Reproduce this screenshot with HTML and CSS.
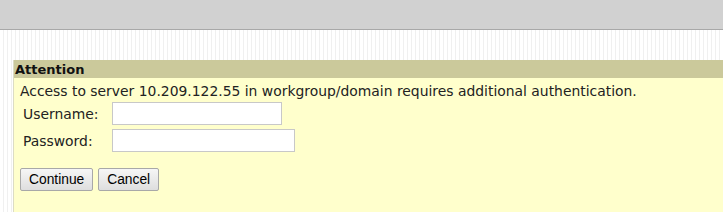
FILE: index.html
```html
<!DOCTYPE html>
<html lang="en">
<head>
    <meta charset="UTF-8">
    <title>Authentication Required</title>
    <link rel="stylesheet" href="styles.css">
</head>
<body>
    <div class="topbar"></div>
    <div class="page">
        <div class="notice">
            <div class="notice-title">Attention</div>
            <div class="notice-body">
                <p class="message">Access to server 10.209.122.55 in workgroup/domain requires additional authentication.</p>
                <form class="login">
                    <div class="field">
                        <label for="user">Username:</label>
                        <input type="text" id="user" class="user-input">
                    </div>
                    <div class="field">
                        <label for="pass">Password:</label>
                        <input type="password" id="pass" class="pass-input">
                    </div>
                    <div class="buttons">
                        <button type="button" class="btn">Continue</button>
                        <button type="button" class="btn">Cancel</button>
                    </div>
                </form>
            </div>
        </div>
    </div>
</body>
</html>
```

FILE: styles.css
```css
body {
    margin: 0;
    font-family: "DejaVu Sans", Verdana, sans-serif;
    font-size: 13.9px;
    color: #222;
    background: #fff;
}
.topbar {
    height: 29px;
    background: #d1d1d1;
    border-bottom: 1px solid #a8a8a8;
}
.page {
    padding: 30px 0 0 13px;
    background: repeating-linear-gradient(90deg, #fff 0, #fff 3px, #f0f0f0 3px, #f0f0f0 4px);
}
.notice {
    background: #ffffcc;
    border-left: 1px solid #dcdcc4;
    height: 152px;
}
.notice-title {
    background: #cbc99b;
    height: 18px;
    line-height: 19px;
    font-size: 13px;
    font-weight: bold;
    color: #111;
    padding-left: 1px;
}
.notice-body {
    padding: 5px 0 0 6px;
}
.message {
    margin: 0;
    line-height: 16px;
}
.field {
    display: flex;
    align-items: center;
    margin-top: 3px;
}
.field + .field {
    margin-top: 4px;
}
.field label {
    width: 92px;
    padding-left: 3px;
    box-sizing: border-box;
}
.field input {
    height: 23px;
    box-sizing: border-box;
    border: 1px solid #c8c8c8;
    background: #fff;
    margin: 0;
    padding: 2px 4px;
}
.user-input {
    width: 170px;
}
.pass-input {
    width: 183px;
}
.buttons {
    display: flex;
    gap: 5px;
    margin-top: 16px;
}
.btn {
    font-family: "Liberation Sans", Arial, sans-serif;
    font-size: 13.8px;
    color: #000;
    height: 23px;
    padding: 0 8px;
    border: 1px solid #a8a8a8;
    border-radius: 2px;
    background: linear-gradient(#f6f6f6, #dedede);
}
```
